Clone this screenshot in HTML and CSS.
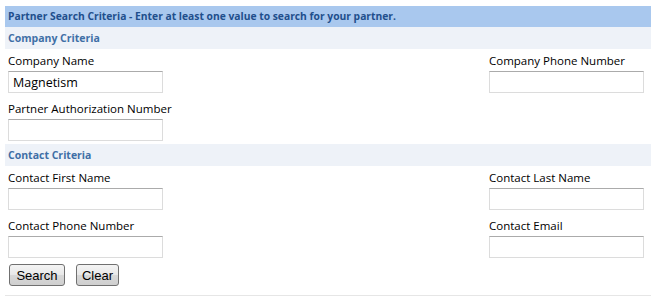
FILE: index.html
```html
<!DOCTYPE html>
<html lang="en">
<head>
    <meta charset="UTF-8">
    <title>Partner Search</title>
    <link rel="stylesheet" href="styles.css">
</head>
<body>
    <div class="search-panel">
        <div class="panel-title">Partner Search Criteria - Enter at least one value to search for your partner.</div>

        <div class="section-title">Company Criteria</div>
        <div class="section-body">
            <div class="field-row">
                <div class="field">
                    <label for="companyName">Company Name</label>
                    <input class="text-input" type="text" id="companyName" value="Magnetism">
                </div>
                <div class="field">
                    <label for="companyPhone">Company Phone Number</label>
                    <input class="text-input" type="text" id="companyPhone">
                </div>
            </div>
            <div class="field-row">
                <div class="field">
                    <label for="authNumber">Partner Authorization Number</label>
                    <input class="text-input" type="text" id="authNumber">
                </div>
            </div>
        </div>

        <div class="section-title">Contact Criteria</div>
        <div class="section-body">
            <div class="field-row">
                <div class="field">
                    <label for="firstName">Contact First Name</label>
                    <input class="text-input" type="text" id="firstName">
                </div>
                <div class="field">
                    <label for="lastName">Contact Last Name</label>
                    <input class="text-input" type="text" id="lastName">
                </div>
            </div>
            <div class="field-row">
                <div class="field">
                    <label for="contactPhone">Contact Phone Number</label>
                    <input class="text-input" type="text" id="contactPhone">
                </div>
                <div class="field">
                    <label for="contactEmail">Contact Email</label>
                    <input class="text-input" type="text" id="contactEmail">
                </div>
            </div>
        </div>

        <div class="button-row">
            <button class="form-button search-button">Search</button>
            <button class="form-button clear-button">Clear</button>
        </div>
    </div>
</body>
</html>
```

FILE: styles.css
```css
body {
    margin: 0;
    background: #fff;
    font-family: "Open Sans", "Noto Sans", sans-serif;
    color: #000;
}

.search-panel {
    margin: 6px 0 0 5px;
    border-bottom: 1px solid #e6e6e6;
}

.panel-title {
    background-color: #a9c8ee;
    color: #1f4f8c;
    font-size: 10.3px;
    font-weight: bold;
    height: 21px;
    line-height: 21px;
    padding-left: 3px;
    white-space: nowrap;
}

.section-title {
    background-color: #eef2f8;
    color: #3f6fa6;
    font-size: 10.5px;
    font-weight: bold;
    height: 22px;
    line-height: 22px;
    padding-left: 3px;
}

.section-body {
    padding: 4px 7px 3px 3px;
    display: flex;
    flex-direction: column;
    gap: 8px;
}

.field-row {
    display: flex;
    justify-content: space-between;
}

.field label {
    display: block;
    font-size: 11.5px;
    line-height: 16px;
    margin-bottom: 2px;
    white-space: nowrap;
}

.text-input {
    display: block;
    box-sizing: border-box;
    width: 155px;
    height: 22px;
    margin: 0;
    padding: 0 4px;
    border: 1px solid #dcdcdc;
    border-top-color: #ababab;
    font-family: "Open Sans", "Noto Sans", sans-serif;
    font-size: 12.5px;
    color: #000;
    outline: none;
}

.button-row {
    display: flex;
    gap: 11px;
    padding: 3px 0 9px 4px;
}

.form-button {
    box-sizing: border-box;
    height: 22px;
    padding: 0;
    border: 1px solid #707070;
    border-radius: 3px;
    background: linear-gradient(to bottom, #f4f4f4 0%, #e8e8e8 50%, #d8d8d8 51%, #cfcfcf 100%);
    font-family: "Liberation Sans", Arial, sans-serif;
    font-size: 13px;
    color: #000;
}

.search-button {
    width: 56px;
}

.clear-button {
    width: 43px;
}
```
